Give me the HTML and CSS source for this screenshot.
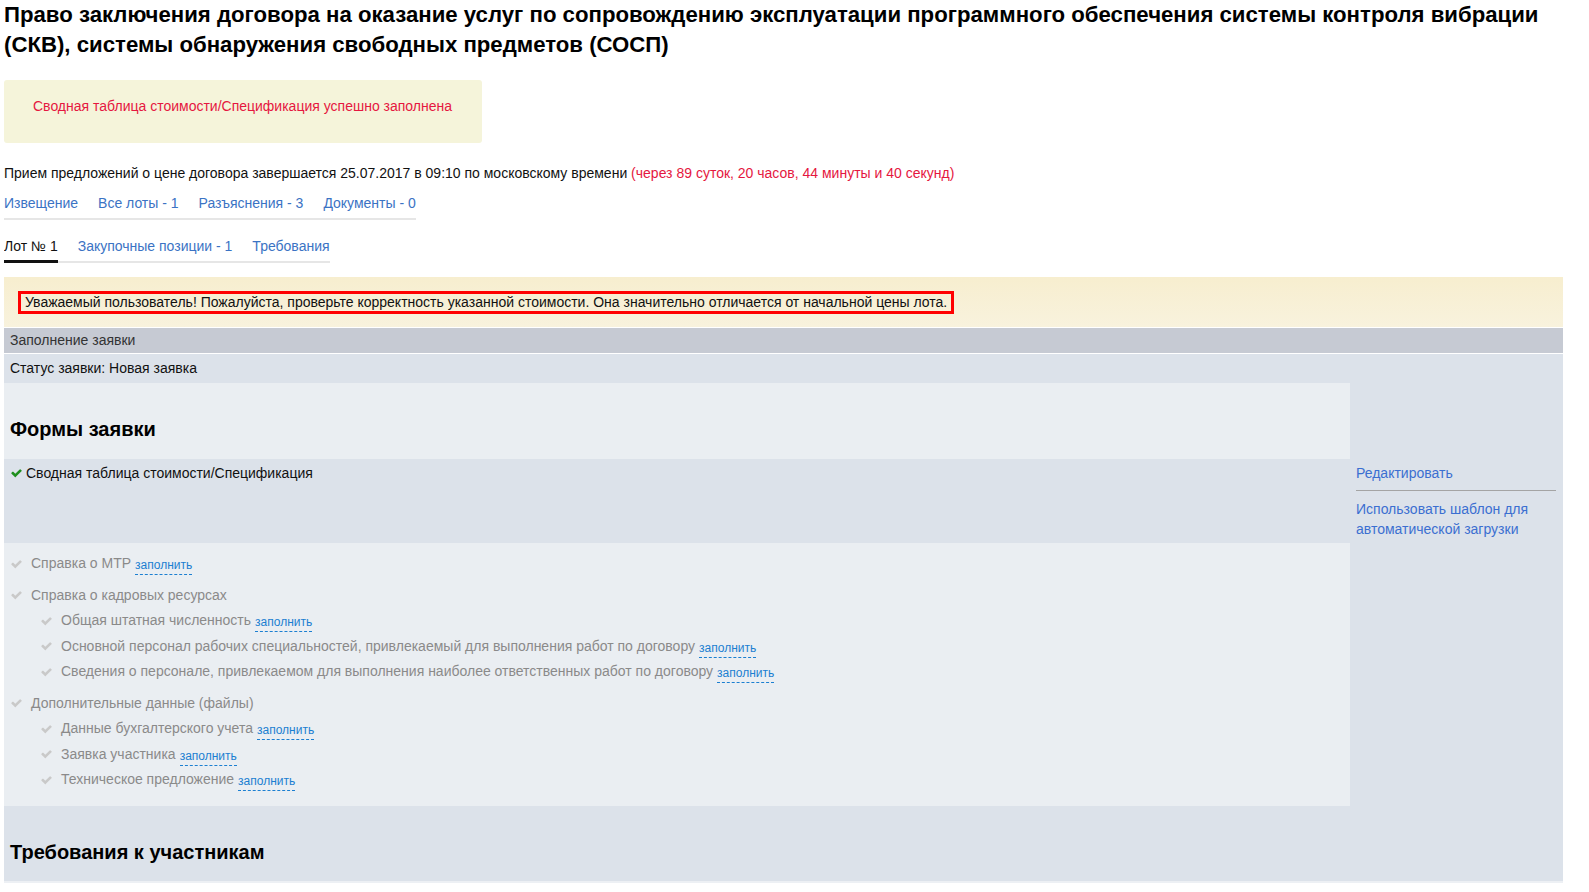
FILE: index.html
```html
<!DOCTYPE html>
<html lang="ru">
<head>
<meta charset="utf-8">
<title>Заявка</title>
<link rel="stylesheet" href="styles.css">
</head>
<body>
<div class="page">
  <h1 class="title">Право заключения договора на оказание услуг по сопровождению эксплуатации программного обеспечения системы контроля вибрации (СКВ), системы обнаружения свободных предметов (СОСП)</h1>

  <div class="success">Сводная таблица стоимости/Спецификация успешно заполнена</div>

  <p class="deadline">Прием предложений о цене договора завершается 25.07.2017 в 09:10 по московскому времени <span class="countdown">(через 89 суток, 20 часов, 44 минуты и 40 секунд)</span></p>

  <nav class="tabs tabs-main">
    <a class="tab" href="#">Извещение</a>
    <a class="tab" href="#">Все лоты - 1</a>
    <a class="tab" href="#">Разъяснения - 3</a>
    <a class="tab" href="#">Документы - 0</a>
  </nav>

  <nav class="tabs tabs-lot">
    <a class="tab tab-active" href="#">Лот № 1</a>
    <a class="tab" href="#">Закупочные позиции - 1</a>
    <a class="tab" href="#">Требования</a>
  </nav>

  <div class="warning-band">
    <div class="warning-box">Уважаемый пользователь! Пожалуйста, проверьте корректность указанной стоимости. Она значительно отличается от начальной цены лота.</div>
  </div>

  <div class="section-head">Заполнение заявки</div>
  <div class="status">Статус заявки: Новая заявка</div>

  <div class="forms">
    <div class="forms-main">
      <div class="forms-title-cell"><h2 class="block-title">Формы заявки</h2></div>
      <div class="spec-row">
        <svg class="check check-green" viewBox="0 0 1792 1792"><path d="M1671 566q0 40-28 68l-724 724-136 136q-28 28-68 28t-68-28l-136-136-362-362q-28-28-28-68t28-68l136-136q28-28 68-28t68 28l294 295 656-657q28-28 68-28t68 28l136 136q28 28 28 68z"/></svg>
        <span>Сводная таблица стоимости/Спецификация</span>
      </div>
      <ul class="form-list">
        <li class="item lvl1">
          <div class="item-line"><svg class="check" viewBox="0 0 1792 1792"><path d="M1671 566q0 40-28 68l-724 724-136 136q-28 28-68 28t-68-28l-136-136-362-362q-28-28-28-68t28-68l136-136q28-28 68-28t68 28l294 295 656-657q28-28 68-28t68 28l136 136q28 28 28 68z"/></svg>Справка о МТР <a class="fill" href="#">заполнить</a></div>
        </li>
        <li class="item lvl1">
          <div class="item-line"><svg class="check" viewBox="0 0 1792 1792"><path d="M1671 566q0 40-28 68l-724 724-136 136q-28 28-68 28t-68-28l-136-136-362-362q-28-28-28-68t28-68l136-136q28-28 68-28t68 28l294 295 656-657q28-28 68-28t68 28l136 136q28 28 28 68z"/></svg>Справка о кадровых ресурсах</div>
          <ul class="sub-list">
            <li class="item-line"><svg class="check" viewBox="0 0 1792 1792"><path d="M1671 566q0 40-28 68l-724 724-136 136q-28 28-68 28t-68-28l-136-136-362-362q-28-28-28-68t28-68l136-136q28-28 68-28t68 28l294 295 656-657q28-28 68-28t68 28l136 136q28 28 28 68z"/></svg>Общая штатная численность <a class="fill" href="#">заполнить</a></li>
            <li class="item-line"><svg class="check" viewBox="0 0 1792 1792"><path d="M1671 566q0 40-28 68l-724 724-136 136q-28 28-68 28t-68-28l-136-136-362-362q-28-28-28-68t28-68l136-136q28-28 68-28t68 28l294 295 656-657q28-28 68-28t68 28l136 136q28 28 28 68z"/></svg>Основной персонал рабочих специальностей, привлекаемый для выполнения работ по договору <a class="fill" href="#">заполнить</a></li>
            <li class="item-line"><svg class="check" viewBox="0 0 1792 1792"><path d="M1671 566q0 40-28 68l-724 724-136 136q-28 28-68 28t-68-28l-136-136-362-362q-28-28-28-68t28-68l136-136q28-28 68-28t68 28l294 295 656-657q28-28 68-28t68 28l136 136q28 28 28 68z"/></svg>Сведения о персонале, привлекаемом для выполнения наиболее ответственных работ по договору <a class="fill" href="#">заполнить</a></li>
          </ul>
        </li>
        <li class="item lvl1">
          <div class="item-line"><svg class="check" viewBox="0 0 1792 1792"><path d="M1671 566q0 40-28 68l-724 724-136 136q-28 28-68 28t-68-28l-136-136-362-362q-28-28-28-68t28-68l136-136q28-28 68-28t68 28l294 295 656-657q28-28 68-28t68 28l136 136q28 28 28 68z"/></svg>Дополнительные данные (файлы)</div>
          <ul class="sub-list">
            <li class="item-line"><svg class="check" viewBox="0 0 1792 1792"><path d="M1671 566q0 40-28 68l-724 724-136 136q-28 28-68 28t-68-28l-136-136-362-362q-28-28-28-68t28-68l136-136q28-28 68-28t68 28l294 295 656-657q28-28 68-28t68 28l136 136q28 28 28 68z"/></svg>Данные бухгалтерского учета <a class="fill" href="#">заполнить</a></li>
            <li class="item-line"><svg class="check" viewBox="0 0 1792 1792"><path d="M1671 566q0 40-28 68l-724 724-136 136q-28 28-68 28t-68-28l-136-136-362-362q-28-28-28-68t28-68l136-136q28-28 68-28t68 28l294 295 656-657q28-28 68-28t68 28l136 136q28 28 28 68z"/></svg>Заявка участника <a class="fill" href="#">заполнить</a></li>
            <li class="item-line"><svg class="check" viewBox="0 0 1792 1792"><path d="M1671 566q0 40-28 68l-724 724-136 136q-28 28-68 28t-68-28l-136-136-362-362q-28-28-28-68t28-68l136-136q28-28 68-28t68 28l294 295 656-657q28-28 68-28t68 28l136 136q28 28 28 68z"/></svg>Техническое предложение <a class="fill" href="#">заполнить</a></li>
          </ul>
        </li>
      </ul>
    </div>
    <aside class="forms-side">
      <a class="side-link side-link-first" href="#">Редактировать</a>
      <a class="side-link" href="#">Использовать шаблон для автоматической загрузки</a>
    </aside>
  </div>

  <div class="requirements"><h2 class="block-title">Требования к участникам</h2></div>
</div>
</body>
</html>
```

FILE: styles.css
```css
* { box-sizing: border-box; }

html { overflow: hidden; }

body {
  margin: 0 4px;
  font-family: "Liberation Sans", Arial, sans-serif;
  font-size: 14px;
  color: #222;
  background: #fff;
}

.page { width: 1559px; }

a { text-decoration: none; }

.title {
  margin: 0;
  font-size: 22.2px;
  line-height: 30px;
  font-weight: bold;
  color: #000;
}

.success {
  margin-top: 20px;
  width: 478px;
  height: 63px;
  padding: 16px 10px 0 29px;
  background: #f5f4da;
  border-radius: 3px;
  color: #e5173f;
  font-size: 14px;
  line-height: 20px;
}

.deadline {
  margin: 20px 0 0;
  line-height: 20px;
  color: #111;
}

.countdown { color: #e5173f; }

.tabs {
  display: flex;
  gap: 20px;
  width: fit-content;
  border-bottom: 2px solid #e6e6e6;
}

.tab {
  flex: none;
  white-space: nowrap;
  color: #3b73c4;
  line-height: 20px;
}

.tabs-main {
  margin-top: 10px;
}

.tabs-main .tab {
  padding-bottom: 5px;
}

.tabs-lot {
  margin-top: 16px;
}

.tabs-lot .tab {
  padding-bottom: 4px;
  margin-bottom: -2px;
  border-bottom: 3px solid transparent;
}

.tab-active {
  color: #111;
  border-bottom-color: #111 !important;
}

.warning-band {
  margin-top: 14px;
  height: 50px;
  padding: 14px 14px 0;
  background: linear-gradient(#f7eecf, #f8f2dd);
}

.warning-box {
  display: inline-block;
  border: 3px solid #f00;
  padding: 0 4px;
  line-height: 17px;
  color: #111;
}

.section-head {
  margin-top: 1px;
  height: 25px;
  line-height: 25px;
  padding-left: 6px;
  background: #c6cad3;
  color: #333;
}

.status {
  margin-top: 1px;
  height: 29px;
  line-height: 29px;
  padding-left: 6px;
  background: #dce2ea;
  color: #111;
}

.forms {
  display: flex;
}

.forms-main {
  width: 1346px;
  background: #eaeef2;
}

.forms-title-cell {
  height: 76px;
  padding-top: 34px;
}

.block-title {
  margin: 0;
  padding-left: 6px;
  font-size: 20px;
  line-height: 24px;
  font-weight: bold;
  color: #000;
}

.spec-row {
  height: 84px;
  background: #dce2ea;
  padding: 5px 6px 0;
  display: flex;
  align-items: flex-start;
  gap: 3px;
  line-height: 18px;
  color: #111;
}

.spec-row .check { margin-top: 3px; }

.check {
  width: 13px;
  height: 12px;
  fill: #c9c9c9;
  flex: none;
}

.check-green { fill: #1e8f1e; }

.form-list {
  list-style: none;
  margin: 0;
  padding: 8px 0 13px 6px;
}

.lvl1 + .lvl1 { margin-top: 6px; }

.item-line {
  display: flex;
  align-items: center;
  line-height: 25.5px;
  color: #8a8a8a;
  white-space: nowrap;
}

.item-line .check { margin-right: 8px; }

.sub-list {
  list-style: none;
  margin: 0;
  padding: 0 0 0 30px;
}

.fill {
  margin-left: 4px;
  margin-top: 6px;
  padding-bottom: 2px;
  font-size: 12px;
  line-height: 14px;
  color: #1b7fd1;
  border-bottom: 1px dashed #1b7fd1;
}

.forms-side {
  flex: 1;
  background: #dce2ea;
  padding: 80px 7px 0 6px;
  display: flex;
  flex-direction: column;
}

.side-link {
  color: #3b6fd1;
  line-height: 20px;
}

.side-link-first {
  padding-bottom: 7px;
  border-bottom: 1px solid #a4a4a4;
  margin-bottom: 8px;
}

.requirements {
  height: 77px;
  padding-top: 34px;
  background: #dce2ea;
  border-bottom: 2px solid #edf0f4;
}
```
